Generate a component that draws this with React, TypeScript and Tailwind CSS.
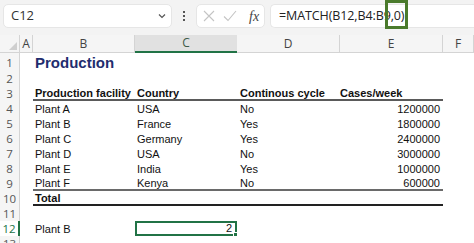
import React from 'react';

const cols = ['A', 'B', 'C', 'D', 'E', 'F'];

interface Row {
  n: number;
  b?: string;
  c?: string;
  d?: string;
  e?: string;
  kind?: 'title' | 'head' | 'last' | 'total' | 'sel';
}

const rows: Row[] = [
  { n: 1, b: 'Production', kind: 'title' },
  { n: 2 },
  { n: 3, b: 'Production facility', c: 'Country', d: 'Continous cycle', e: 'Cases/week', kind: 'head' },
  { n: 4, b: 'Plant A', c: 'USA', d: 'No', e: '1200000' },
  { n: 5, b: 'Plant B', c: 'France', d: 'Yes', e: '1800000' },
  { n: 6, b: 'Plant C', c: 'Germany', d: 'Yes', e: '2400000' },
  { n: 7, b: 'Plant D', c: 'USA', d: 'No', e: '3000000' },
  { n: 8, b: 'Plant E', c: 'India', d: 'Yes', e: '1000000' },
  { n: 9, b: 'Plant F', c: 'Kenya', d: 'No', e: '600000', kind: 'last' },
  { n: 10, b: 'Total', kind: 'total' },
  { n: 11 },
  { n: 12, b: 'Plant B', c: '2', kind: 'sel' },
  { n: 13 },
];

const grid = 'grid grid-cols-[20px_13px_102px_102px_103px_103px_1fr]';

const App: React.FC = () => {
  return (
    <div className="w-[474px] h-[243px] overflow-hidden bg-white relative font-['Liberation_Sans',Arial,sans-serif]">
      {/* formula bar */}
      <div className="h-[35px] bg-[#f3f3f3] flex items-start pt-[4px] pl-[3px] gap-[5px] font-['Open_Sans',sans-serif]">
        <div className="w-[169px] h-[24px] bg-white rounded-[5px] border border-[#e6e6e6] flex items-center justify-between pl-[7px] pr-[4px] text-[13px] text-[#333]">
          <span>C12</span>
          <svg width="10" height="10" viewBox="0 0 10 10" className="text-[#555]">
            <path d="M2 3.5l3 3 3-3" fill="none" stroke="currentColor" strokeWidth="1.2" />
          </svg>
        </div>
        <div className="w-[14px] h-[24px] flex flex-col items-center justify-center gap-[2px]">
          <span className="w-[2px] h-[2px] bg-[#555]" />
          <span className="w-[2px] h-[2px] bg-[#555]" />
          <span className="w-[2px] h-[2px] bg-[#555]" />
        </div>
        <div className="w-[69px] h-[24px] bg-white rounded-[5px] border border-[#e6e6e6] flex items-center pl-[6px] gap-[8px]">
          <svg width="12" height="12" viewBox="0 0 12 12">
            <path d="M1 1l10 10M11 1L1 11" stroke="#c4c4c4" strokeWidth="1.1" />
          </svg>
          <svg width="14" height="12" viewBox="0 0 14 12">
            <path d="M1 6.5l4 4L13 1" fill="none" stroke="#c4c4c4" strokeWidth="1.1" />
          </svg>
          <span className="text-[14px] italic text-[#444] font-['Liberation_Serif',serif] ml-[4px]">fx</span>
        </div>
        <div className="flex-1 h-[24px] bg-white rounded-l-[5px] border border-r-0 border-[#e6e6e6] flex items-center pl-[8px] text-[12.5px] tracking-[-0.1px] text-[#222]">
          =MATCH(B12,B4:B9,0)
        </div>
      </div>

      {/* annotation box */}
      <div className="absolute left-[385px] top-0 w-[23px] h-[29px] border-[3px] border-[#4a7a2c]" />

      {/* column headers */}
      <div className={`${grid} h-[18px] bg-[#f5f5f5] text-[12px] leading-none text-[#444] font-['Open_Sans',sans-serif] border-b border-[#d4d4d4]`}>
        <div className="relative border-r border-[#d4d4d4]">
          <svg width="8" height="8" viewBox="0 0 8 8" className="absolute right-[2px] bottom-[2px]">
            <path d="M8 0L8 8L0 8Z" fill="#cfcfcf" />
          </svg>
        </div>
        {cols.map((c) => (
          <div
            key={c}
            className={
              c === 'C'
                ? 'flex items-center justify-center bg-[#e1e1e1] border-b-2 border-[#217346] text-[#3d5a48] -mb-px'
                : 'flex items-center justify-center border-r border-[#d4d4d4]'
            }
          >
            {c}
          </div>
        ))}
      </div>

      {/* rows */}
      {rows.map((r) => {
        const h = r.kind === 'title' ? 'h-[18px]' : 'h-[15px]';
        const line =
          r.kind === 'head'
            ? 'border-b-2 border-[#5a5a5a] pt-[2px]'
            : r.kind === 'last'
            ? 'border-b-2 border-[#6a6a6a] pt-[2px]'
            : r.kind === 'total'
            ? 'border-b-2 border-[#222] pt-[2px]'
            : 'pt-[1px]';
        const bold = r.kind === 'head' || r.kind === 'total' ? 'font-bold' : '';
        return (
          <div key={r.n} className={`${grid} ${h} grid-rows-[100%] text-[11px] leading-none text-[#111]`}>
            <div
              className={
                r.kind === 'sel'
                  ? 'flex items-center justify-center border-r-2 border-[#217346] text-[#217346] text-[11.5px] font-["Open_Sans",sans-serif]'
                  : 'flex items-center justify-center bg-[#f5f5f5] border-r border-[#d4d4d4] text-[#555] text-[11.5px] font-["Open_Sans",sans-serif]'
              }
            >
              <span className="leading-[11px]">{r.n}</span>
            </div>
            <div />
            <div className={`flex items-center pl-[2px] whitespace-nowrap ${line} ${bold}`}>
              {r.kind === 'title' ? (
                <span className="text-[15px] font-bold text-[#1f2d6e] leading-none">{r.b}</span>
              ) : (
                r.b
              )}
            </div>
            {r.kind === 'sel' ? (
              <div className="relative flex items-center justify-end pr-[3px] border-2 border-[#217346]">
                {r.c}
                <span className="absolute -right-[3px] -bottom-[3px] w-[5px] h-[5px] bg-[#217346] border border-white" />
              </div>
            ) : (
              <div className={`flex items-center pl-[2px] whitespace-nowrap ${line} ${bold}`}>{r.c}</div>
            )}
            <div className={`flex items-center pl-[3px] whitespace-nowrap ${line} ${bold}`}>{r.d}</div>
            <div
              className={`flex items-center whitespace-nowrap ${line} ${bold} ${
                r.kind === 'head' ? 'pl-[0px]' : 'justify-end pr-[3px]'
              }`}
            >
              {r.e}
            </div>
            <div />
          </div>
        );
      })}
    </div>
  );
};

export default App;
